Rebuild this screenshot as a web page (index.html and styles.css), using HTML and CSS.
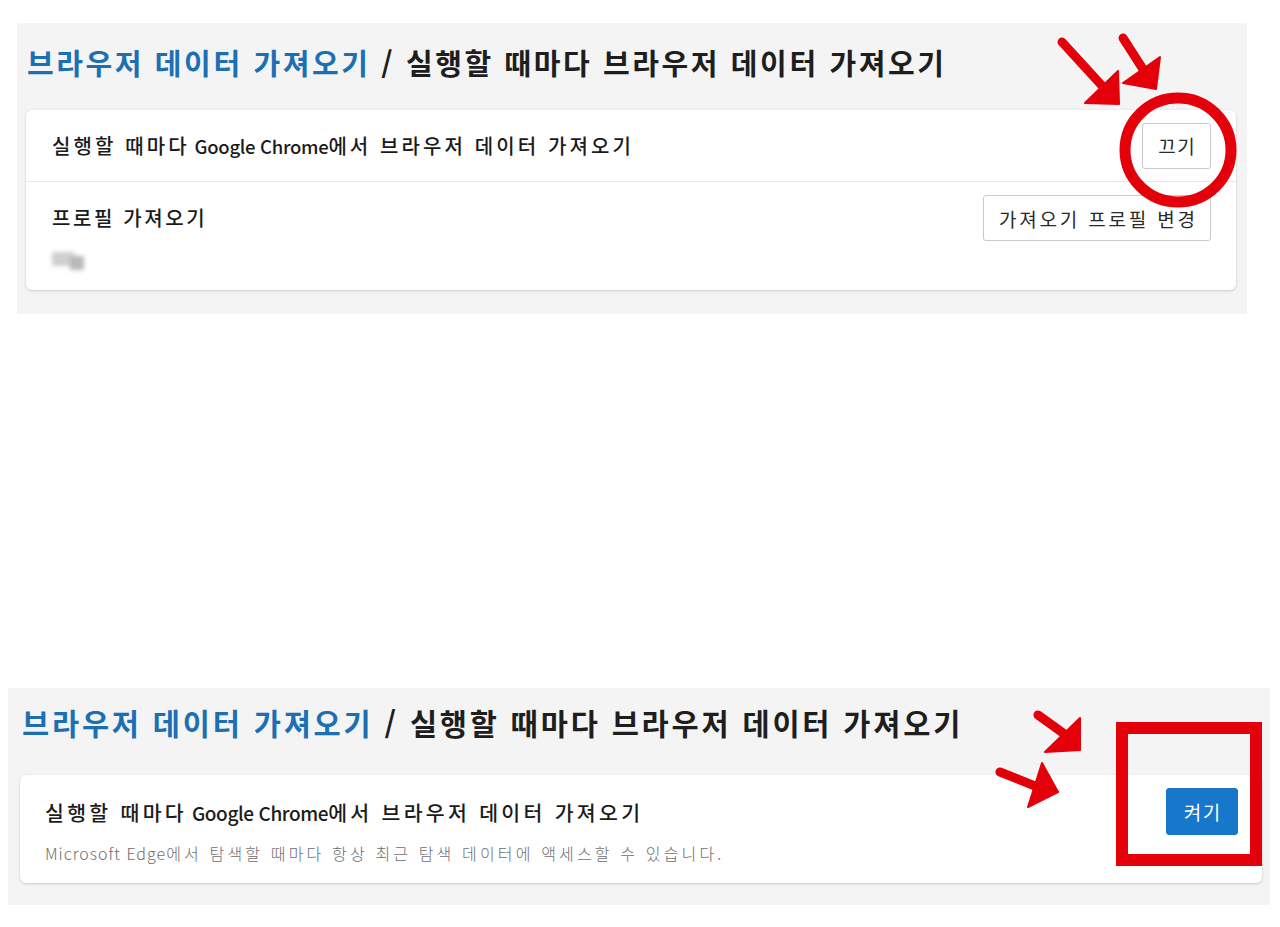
FILE: index.html
```html
<!DOCTYPE html>
<html lang="ko">
<head>
<meta charset="utf-8">
<title>브라우저 데이터 가져오기</title>
<link rel="stylesheet" href="styles.css">
</head>
<body>
<section class="panel panel-top">
  <h1 class="title"><span class="crumb">브라우저 데이터 가져오기</span> / 실행할 때마다 브라우저 데이터 가져오기</h1>
  <div class="card">
    <div class="row row-first">
      <div class="row-text">
        <div class="row-title">실행할 때마다<span class="latin"> Google Chrome</span>에서 브라우저 데이터 가져오기</div>
      </div>
      <button class="btn">끄기</button>
    </div>
    <div class="row row-profile">
      <div class="row-text profile-text">
        <div class="row-title">프로필 가져오기</div>
        <div class="blur-name"><span class="b1"></span><span class="b2"></span></div>
      </div>
      <button class="btn">가져오기 프로필 변경</button>
    </div>
  </div>
  <svg class="marks marks-top" width="1230" height="291" viewBox="0 0 1230 291">
    <g fill="#e3000b" stroke="#e3000b" stroke-linejoin="round">
      <line x1="1045" y1="19" x2="1088" y2="66" stroke-width="9" stroke-linecap="round"/>
      <polygon points="1068,80 1101,48 1102,81" stroke-width="2"/>
      <line x1="1106" y1="15" x2="1131" y2="54" stroke-width="9" stroke-linecap="round"/>
      <polygon points="1106,60 1143,34 1139,66" stroke-width="2"/>
    </g>
    <ellipse cx="1161" cy="127" rx="53" ry="52" fill="none" stroke="#e3000b" stroke-width="11"/>
  </svg>
</section>

<section class="panel panel-bottom">
  <h1 class="title"><span class="crumb">브라우저 데이터 가져오기</span> / 실행할 때마다 브라우저 데이터 가져오기</h1>
  <div class="card">
    <div class="row row-single">
      <div class="row-text">
        <div class="row-title">실행할 때마다<span class="latin"> Google Chrome</span>에서 브라우저 데이터 가져오기</div>
        <div class="row-sub"><span class="latin">Microsoft Edge</span>에서 탐색할 때마다 항상 최근 탐색 데이터에 액세스할 수 있습니다.</div>
      </div>
      <button class="btn btn-primary">켜기</button>
    </div>
  </div>
  <svg class="marks marks-bottom" width="1262" height="217" viewBox="0 0 1262 217">
    <g fill="#e3000b" stroke="#e3000b" stroke-linejoin="round">
      <line x1="1030" y1="27" x2="1062" y2="50" stroke-width="9" stroke-linecap="round"/>
      <polygon points="1037,64 1072,30 1072,62" stroke-width="2"/>
      <line x1="992" y1="84" x2="1032" y2="100" stroke-width="9" stroke-linecap="round"/>
      <polygon points="1020,119 1034,75 1050,104" stroke-width="2"/>
    </g>
    <rect x="1114" y="40" width="134" height="132" fill="none" stroke="#e3000b" stroke-width="12"/>
  </svg>
</section>
</body>
</html>
```
FILE: styles.css
```css
* { box-sizing: border-box; }

body {
  margin: 0;
  background: #ffffff;
  font-family: "Noto Sans CJK KR", "Noto Sans", sans-serif;
  color: #1b1b1b;
}

.panel {
  position: relative;
  background: #f4f4f4;
}

.panel-top {
  margin: 23px 0 0 17px;
  width: 1230px;
  height: 291px;
  padding: 21px 11px 24px 9px;
}

.panel-bottom {
  margin: 374px 0 0 8px;
  width: 1262px;
  height: 217px;
  padding: 16px 8px 22px 12px;
}

.title {
  margin: 0;
  font-size: 29px;
  line-height: 36px;
  font-weight: 700;
  letter-spacing: 2.6px;
  color: #1e1e1e;
  white-space: nowrap;
  padding-left: 1px;
}

.panel-bottom .title {
  font-size: 29.5px;
  letter-spacing: 2.8px;
  padding-left: 2px;
}

.crumb {
  color: #1c6fb3;
}

.card {
  background: #ffffff;
  border-radius: 6px;
  box-shadow: 0 1px 3px rgba(0, 0, 0, 0.16), 0 0 1px rgba(0, 0, 0, 0.08);
}

.panel-top .card { margin-top: 30px; }
.panel-bottom .card { margin-top: 35px; }

.row {
  display: flex;
  justify-content: space-between;
}

.row-first {
  height: 72px;
  align-items: center;
  padding: 0 25px 0 26px;
  border-bottom: 1px solid #e8e8e8;
}

.row-profile {
  height: 108px;
  align-items: flex-start;
  padding: 13px 25px 0 26px;
}

.profile-text { padding-top: 11px; }

.row-single {
  height: 108px;
  align-items: flex-start;
  padding: 13px 24px 0 25px;
}

.row-single .row-text { padding-top: 12px; }

.row-title {
  font-size: 20px;
  line-height: 24px;
  font-weight: 500;
  color: #1b1b1b;
  letter-spacing: 3.1px;
  white-space: nowrap;
}

.row-profile .row-title { letter-spacing: 2.6px; }

.row-title .latin {
  font-size: 18.5px;
  letter-spacing: -0.3px;
}

.panel-bottom .row-title {
  font-size: 20.5px;
  letter-spacing: 3.3px;
}

.panel-bottom .row-title .latin {
  font-size: 19px;
  letter-spacing: -0.4px;
}

.row-sub {
  margin-top: 18px;
  font-size: 16px;
  line-height: 20px;
  font-weight: 300;
  color: #6e6e6e;
  letter-spacing: 3.15px;
  white-space: nowrap;
}

.row-sub .latin {
  letter-spacing: 1px;
}

.blur-name {
  position: relative;
  margin-top: 18px;
  width: 34px;
  height: 24px;
  filter: blur(2px);
}

.blur-name .b1 {
  position: absolute;
  left: 0;
  top: 4px;
  width: 22px;
  height: 14px;
  background: #cfcfcf;
}

.blur-name .b2 {
  position: absolute;
  left: 18px;
  top: 8px;
  width: 14px;
  height: 14px;
  background: #b9b9b9;
}

.btn {
  font-family: inherit;
  font-size: 19px;
  height: 46px;
  padding: 0;
  background: #ffffff;
  color: #2a2a2a;
  border: 1px solid #c9c9c9;
  border-radius: 3px;
  white-space: nowrap;
  letter-spacing: 2.8px;
  text-indent: 2.8px;
}

.row-first .btn { width: 69px; letter-spacing: 1.5px; text-indent: 1.5px; }
.row-profile .btn { width: 228px; }

.btn-primary {
  width: 72px;
  height: 47px;
  background: #1677cb;
  border-color: #1677cb;
  color: #ffffff;
  font-size: 19px;
  letter-spacing: 1.5px;
  text-indent: 1.5px;
}

.marks {
  position: absolute;
  left: 0;
  top: 0;
  pointer-events: none;
}
```
